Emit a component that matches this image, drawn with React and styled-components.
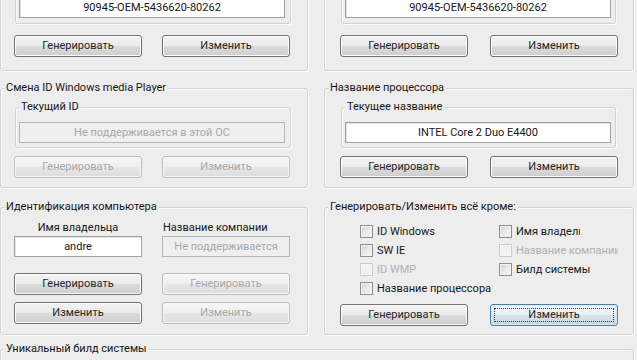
import styled, { createGlobalStyle } from "styled-components";

const GlobalStyle = createGlobalStyle`
  html, body {
    margin: 0;
    padding: 0;
    background: #ededed;
  }
  body {
    font-family: Roboto, "Liberation Sans", sans-serif;
    font-size: 11px;
    color: #161616;
  }
`;

const Window = styled.div`
  width: 637px;
  height: 360px;
  overflow: hidden;
  background: #ededed;
`;

const Columns = styled.div`
  margin-top: -42px;
  display: grid;
  grid-template-columns: 308px 310px;
  column-gap: 16px;
  align-items: stretch;
`;

const Group = styled.fieldset`
  margin: ${(p) => p.$mt || 0}px 0 0 ${(p) => p.$ml || 0}px;
  padding: 0;
  min-width: 0;
  border: 1px solid #d2d2d2;
  border-radius: 3px;
  box-shadow: inset 1px 1px 0 #fbfbfb, 1px 1px 0 #fbfbfb;
  grid-column: ${(p) => (p.$wide ? "1 / -1" : "auto")};
  width: ${(p) => (p.$w ? `${p.$w}px` : "auto")};
  box-sizing: border-box;
`;

const Legend = styled.legend`
  margin-left: 3px;
  padding: 0 2px;
  line-height: 14px;
  background: #ededed;
  position: relative;
`;

const Body = styled.div`
  padding: ${(p) => p.$pt || 0}px ${(p) => p.$pr || 0}px
    ${(p) => p.$pb || 0}px ${(p) => p.$pl || 0}px;
  min-height: ${(p) => p.$h || 0}px;
`;

const TextBox = styled.div`
  height: 21px;
  box-sizing: border-box;
  border: 1px solid ${(p) => (p.$disabled ? "#b4b4b4" : "#a2a2a2")};
  background: ${(p) => (p.$disabled ? "#efefef" : "#ffffff")};
  box-shadow: ${(p) => (p.$disabled ? "none" : "inset 1px 1px 0 #e4e4e4")};
  color: ${(p) => (p.$disabled ? "#a9a9a9" : "#161616")};
  text-align: center;
  line-height: 19px;
  white-space: nowrap;
  overflow: hidden;
`;

const ButtonRow = styled.div`
  display: flex;
  gap: ${(p) => p.$gap || 20}px;
  margin-top: ${(p) => p.$mt || 0}px;
`;

const Button = styled.div`
  position: relative;
  width: 128px;
  height: 22px;
  box-sizing: border-box;
  margin-top: ${(p) => p.$mt || 0}px;
  border: 1px solid
    ${(p) => (p.$disabled ? "#bcbcbc" : p.$focused ? "#4f7fa6" : "#727272")};
  border-radius: 3px;
  background: ${(p) =>
    p.$disabled
      ? "linear-gradient(#f6f6f6 0%, #efefef 48%, #e6e6e6 52%, #dedede 100%)"
      : p.$focused
      ? "linear-gradient(#f3f7fa 0%, #e9eef2 48%, #d8e1e7 52%, #ccd6dd 100%)"
      : "linear-gradient(#f3f3f3 0%, #ebebeb 48%, #dcdcdc 52%, #cdcdcd 100%)"};
  box-shadow: inset 0 0 0 1px
    ${(p) => (p.$focused ? "#d4e8f6" : p.$disabled ? "#f8f8f8" : "#fcfcfc")};
  color: ${(p) => (p.$disabled ? "#a9a9a9" : "#262626")};
  text-align: center;
  line-height: 20px;

  &::after {
    content: "";
    display: ${(p) => (p.$focused ? "block" : "none")};
    position: absolute;
    inset: 3px;
    border: 1px dotted #3a3a3a;
  }
`;

const FieldGrid = styled.div`
  display: grid;
  grid-template-columns: 128px 128px;
  column-gap: 20px;
`;

const Field = styled.div`
  display: flex;
  flex-direction: column;
`;

const Caption = styled.div`
  line-height: 14px;
  text-align: ${(p) => p.$align || "center"};
  padding-left: ${(p) => p.$pl || 0}px;
  margin-bottom: 1px;
  white-space: nowrap;
`;

const CheckGrid = styled.div`
  display: grid;
  grid-template-columns: 139px 1fr;
  grid-template-rows: repeat(4, 19px);
  grid-auto-flow: column;
  margin-left: 20px;
`;

const Check = styled.div`
  display: flex;
  align-items: center;
  gap: 4px;
  color: ${(p) => (p.$disabled ? "#b0b0b0" : "#161616")};
`;

const Box = styled.span`
  flex: none;
  width: 13px;
  height: 13px;
  box-sizing: border-box;
  border: 1px solid ${(p) => (p.$disabled ? "#cacaca" : "#8e8e8e")};
  background: ${(p) =>
    p.$disabled
      ? "#f1f1f1"
      : "linear-gradient(135deg, #cfd2d6 0%, #e6e7e9 45%, #f7f7f7 100%)"};
  box-shadow: inset 0 0 0 1px ${(p) => (p.$disabled ? "#f6f6f6" : "#f2f2f2")};
`;

const CheckText = styled.span`
  white-space: nowrap;
  overflow: hidden;
  max-width: ${(p) => (p.$clip ? `${p.$clip}px` : "none")};
`;

// group with a current value box and the two action buttons
function IdGroup({ title, sub, value, disabled, mt, spacing, right }) {
  return (
    <Group $mt={mt}>
      <Legend>{title || "\u00a0"}</Legend>
      <Body $pt={spacing.pt} $pb={spacing.pb} $pl={right ? 15 : 13}>
        <Group $ml={1} $w={right ? 275 : 276}>
          <Legend>{sub || "\u00a0"}</Legend>
          <Body $pt={8} $pb={spacing.inner} $pl={3} $pr={right ? 4 : 5}>
            <TextBox $disabled={disabled}>{value}</TextBox>
          </Body>
        </Group>
        <ButtonRow $mt={spacing.mt} $gap={right ? 22 : 20}>
          <Button $disabled={disabled}>Генерировать</Button>
          <Button $disabled={disabled}>Изменить</Button>
        </ButtonRow>
      </Body>
    </Group>
  );
}

const topSpacing = { pt: 3, inner: 5, mt: 11, pb: 13 };
const midSpacing = { pt: 5, inner: 4, mt: 8, pb: 9 };

export default function App() {
  return (
    <Window>
      <GlobalStyle />
      <Columns>
        {/* top row is scrolled past, only its lower half shows */}
        <IdGroup value="90945-OEM-5436620-80262" spacing={topSpacing} />
        <IdGroup value="90945-OEM-5436620-80262" spacing={topSpacing} right />

        <IdGroup
          title="Смена ID Windows media Player"
          sub="Текущий ID"
          value="Не поддерживается в этой ОС"
          disabled
          mt={10}
          spacing={midSpacing}
        />
        <IdGroup
          title="Название процессора"
          sub="Текущее название"
          value="INTEL Core 2 Duo E4400"
          mt={10}
          spacing={midSpacing}
          right
        />

        <Group $mt={12}>
          <Legend>Идентификация компьютера</Legend>
          <Body $pt={7} $pb={8} $pl={13}>
            <FieldGrid>
              <Field>
                <Caption>Имя владельца</Caption>
                <TextBox>andre</TextBox>
                <Button $mt={16}>Генерировать</Button>
                <Button $mt={7}>Изменить</Button>
              </Field>
              <Field>
                <Caption $align="left" $pl={1}>
                  Название компании
                </Caption>
                <TextBox $disabled>Не поддерживается</TextBox>
                <Button $mt={16} $disabled>
                  Генерировать
                </Button>
                <Button $mt={7} $disabled>
                  Изменить
                </Button>
              </Field>
            </FieldGrid>
          </Body>
        </Group>

        <Group $mt={12}>
          <Legend>Генерировать/Изменить всё кроме:</Legend>
          <Body $pt={8} $pb={8} $pl={15}>
            <CheckGrid>
              <Check>
                <Box />
                <CheckText>ID Windows</CheckText>
              </Check>
              <Check>
                <Box />
                <CheckText>SW IE</CheckText>
              </Check>
              <Check $disabled>
                <Box $disabled />
                <CheckText>ID WMP</CheckText>
              </Check>
              <Check>
                <Box />
                <CheckText>Название процессора</CheckText>
              </Check>
              <Check>
                <Box />
                <CheckText $clip={64}>Имя владельца</CheckText>
              </Check>
              <Check $disabled>
                <Box $disabled />
                <CheckText $clip={102}>Название компании</CheckText>
              </Check>
              <Check>
                <Box />
                <CheckText>Билд системы</CheckText>
              </Check>
            </CheckGrid>
            <ButtonRow $mt={6} $gap={22}>
              <Button>Генерировать</Button>
              <Button $focused>Изменить</Button>
            </ButtonRow>
          </Body>
        </Group>

        <Group $mt={7} $wide>
          <Legend>Уникальный билд системы</Legend>
          <Body $h={40} />
        </Group>
      </Columns>
    </Window>
  );
}
